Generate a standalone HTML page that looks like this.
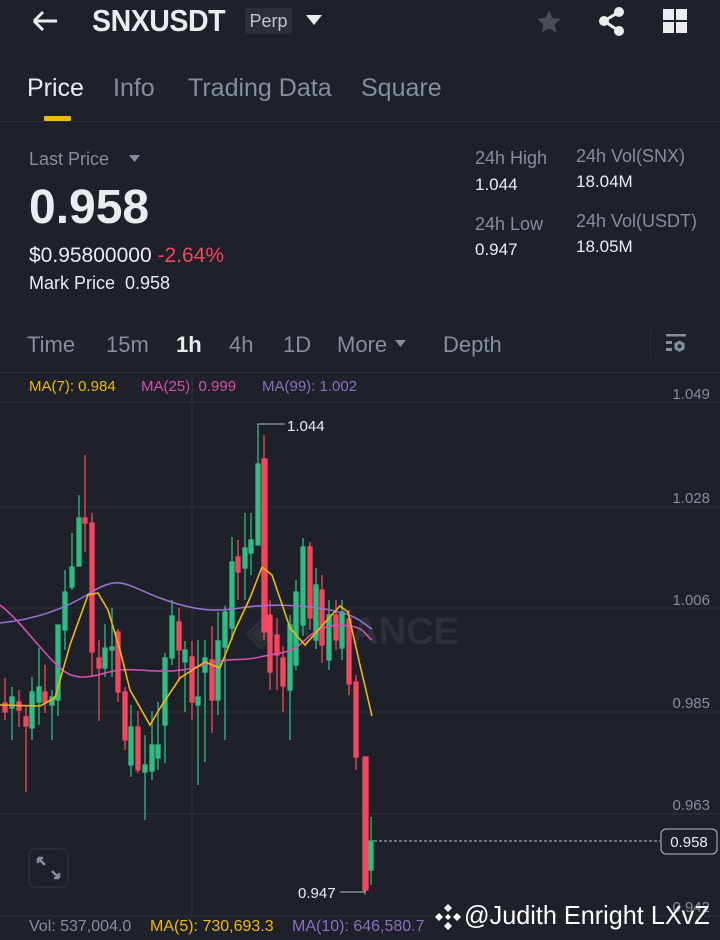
<!DOCTYPE html>
<html><head><meta charset="utf-8"><style>
*{margin:0;padding:0;box-sizing:border-box}
body{width:720px;height:940px;background:#1e2129;overflow:hidden;position:relative;font-family:"Liberation Sans Narrow","Liberation Sans",sans-serif;color:#eaecef}
.a{position:absolute;white-space:nowrap}
.g{color:#848e9c}
</style></head><body>
<svg class="a" style="left:30px;top:8px" width="30" height="26" viewBox="0 0 30 26"><path d="M4 13H27M4 13L13 4M4 13L13 22" stroke="#eaecef" stroke-width="3" fill="none"/></svg>
<div class="a" style="left:92px;top:3px;font-size:31px;font-weight:bold;font-family:'Liberation Sans',sans-serif;letter-spacing:-0.5px;transform:scaleX(.92);transform-origin:left">SNXUSDT</div>
<div class="a" style="left:245px;top:8px;width:47px;height:26px;background:#2b2f36;border-radius:3px;font-size:18px;color:#c0c4cc;text-align:center;line-height:26px">Perp</div>
<svg class="a" style="left:305px;top:14px" width="18" height="12"><path d="M1 1H17L9 11Z" fill="#eaecef"/></svg>
<svg class="a" style="left:535px;top:8px" width="28" height="28" viewBox="0 0 24 24"><path d="M12 2l3 6.5 7 .8-5.2 4.8 1.5 7L12 17.5 5.7 21l1.5-7L2 9.3l7-.8z" fill="#474d57"/></svg>
<svg class="a" style="left:596px;top:6px" width="32" height="30" viewBox="0 0 32 30"><circle cx="23" cy="6" r="5" fill="#eaecef"/><circle cx="8" cy="15" r="5" fill="#eaecef"/><circle cx="23" cy="25" r="5" fill="#eaecef"/><path d="M8 15L23 6M8 15L23 25" stroke="#eaecef" stroke-width="3"/></svg>
<svg class="a" style="left:663px;top:9px" width="25" height="25"><rect x="0" y="0" width="11" height="11" fill="#eaecef"/><rect x="13" y="0" width="11" height="11" fill="#eaecef"/><rect x="0" y="13" width="11" height="11" fill="#eaecef"/><rect x="13" y="13" width="11" height="11" fill="#eaecef"/></svg>
<div class="a" style="left:27px;top:74px;font-size:25px">Price</div>
<div class="a g" style="left:113px;top:74px;font-size:25px">Info</div>
<div class="a g" style="left:188px;top:74px;font-size:25px">Trading Data</div>
<div class="a g" style="left:361px;top:74px;font-size:25px">Square</div>
<div class="a" style="left:44px;top:116px;width:27px;height:5px;background:#f0b90b;border-radius:1px"></div>
<div class="a" style="left:0;top:121px;width:720px;height:1px;background:#2b2f36"></div>
<div class="a g" style="left:29px;top:149px;font-size:18px">Last Price</div>
<svg class="a" style="left:129px;top:155px" width="11" height="8"><path d="M0 0H11L5.5 7Z" fill="#848e9c"/></svg>
<div class="a" style="left:29px;top:180px;font-size:48px;font-weight:bold">0.958</div>
<div class="a" style="left:29px;top:244px;font-size:21px">$0.95800000 <span style="color:#f6465d">-2.64%</span></div>
<div class="a" style="left:29px;top:273px;font-size:18px">Mark Price&nbsp; 0.958</div>
<div class="a g" style="left:475px;top:148px;font-size:18px">24h High</div>
<div class="a" style="left:475px;top:175px;font-size:17px">1.044</div>
<div class="a g" style="left:475px;top:214px;font-size:18px">24h Low</div>
<div class="a" style="left:475px;top:240px;font-size:17px">0.947</div>
<div class="a g" style="left:576px;top:146px;font-size:18px">24h Vol(SNX)</div>
<div class="a" style="left:576px;top:172px;font-size:17px">18.04M</div>
<div class="a g" style="left:576px;top:211px;font-size:18px">24h Vol(USDT)</div>
<div class="a" style="left:576px;top:237px;font-size:17px">18.05M</div>
<div class="a g" style="left:27px;top:332px;font-size:22px">Time</div>
<div class="a g" style="left:106px;top:332px;font-size:22px">15m</div>
<div class="a" style="left:176px;top:332px;font-size:22px;font-weight:bold">1h</div>
<div class="a g" style="left:229px;top:332px;font-size:22px">4h</div>
<div class="a g" style="left:283px;top:332px;font-size:22px">1D</div>
<div class="a g" style="left:337px;top:332px;font-size:22px">More</div>
<svg class="a" style="left:395px;top:340px" width="11" height="8"><path d="M0 0H11L5.5 7Z" fill="#848e9c"/></svg>
<div class="a g" style="left:443px;top:332px;font-size:22px">Depth</div>
<div class="a" style="left:650px;top:330px;width:1px;height:26px;background:#2b2f36"></div>
<svg class="a" style="left:664px;top:333px" width="24" height="24"><rect x="2" y="1" width="20" height="2.5" fill="#848e9c"/><rect x="2" y="8" width="6" height="3" fill="#848e9c"/><rect x="2" y="15" width="6" height="3" fill="#848e9c"/><path d="M15.5 7.5l5 2.8v5.8l-5 2.8-5-2.8v-5.8z" fill="#848e9c"/><circle cx="15.5" cy="13.2" r="2" fill="#1e2129"/></svg>
<div class="a" style="left:0;top:372px;width:720px;height:1px;background:#2b2f36"></div>
<div class="a" style="left:29px;top:378px;font-size:15px;color:#f0b90b">MA(7): 0.984</div>
<div class="a" style="left:141px;top:378px;font-size:15px;color:#d54fb0">MA(25): 0.999</div>
<div class="a" style="left:262px;top:378px;font-size:15px;color:#8a6fc0">MA(99): 1.002</div>
<svg class="a" style="left:0;top:0" width="720" height="940">
<g stroke="#2b2f36" stroke-width="1.3">
<line x1="0" y1="402" x2="720" y2="402"/><line x1="0" y1="507" x2="720" y2="507"/><line x1="0" y1="608" x2="720" y2="608"/><line x1="0" y1="712" x2="720" y2="712"/><line x1="0" y1="814" x2="720" y2="814"/><line x1="0" y1="916" x2="720" y2="916"/><line x1="192" y1="372" x2="192" y2="916"/>
</g>
<text x="246" y="644" font-family="Liberation Sans" font-weight="bold" font-size="38" fill="#2c3039">◈ BINANCE</text>
<g font-family="Liberation Sans Narrow,Liberation Sans" font-size="15" fill="#848e9c" text-anchor="end">
<text x="710" y="399">1.049</text><text x="710" y="503">1.028</text><text x="710" y="605">1.006</text><text x="710" y="708">0.985</text><text x="710" y="810">0.963</text><text x="710" y="912">0.942</text>
</g>
<g stroke-width="1.3">
<g fill="#f6465d" stroke="#f6465d">
<line x1="5" y1="678" x2="5" y2="720"/><rect x="3" y="703" width="4" height="9"/>
<line x1="19" y1="690" x2="19" y2="727"/><rect x="17" y="702" width="4" height="8"/>
<line x1="26" y1="705" x2="26" y2="792"/><rect x="24" y="717" width="4" height="9"/>
<line x1="45" y1="665" x2="45" y2="713"/><rect x="43" y="692" width="4" height="10"/>
<line x1="85" y1="455" x2="85" y2="552"/><rect x="83" y="518" width="4" height="5"/>
<line x1="92" y1="513" x2="92" y2="676"/><rect x="90" y="523" width="4" height="129"/>
<line x1="99" y1="640" x2="99" y2="721"/><rect x="97" y="658" width="4" height="10"/>
<line x1="118" y1="629" x2="118" y2="702"/><rect x="116" y="632" width="4" height="60"/>
<line x1="125" y1="687" x2="125" y2="750"/><rect x="123" y="692" width="4" height="48"/>
<line x1="138" y1="711" x2="138" y2="773"/><rect x="136" y="727" width="4" height="43"/>
<line x1="179" y1="608" x2="179" y2="681"/><rect x="177" y="622" width="4" height="28"/>
<line x1="192" y1="641" x2="192" y2="720"/><rect x="190" y="657" width="4" height="45"/>
<line x1="212" y1="626" x2="212" y2="733"/><rect x="210" y="660" width="4" height="40"/>
<line x1="238" y1="540" x2="238" y2="600"/><rect x="236" y="557" width="4" height="15"/>
<line x1="264" y1="435" x2="264" y2="640"/><rect x="262" y="459" width="5" height="173"/>
<line x1="270" y1="600" x2="270" y2="690"/><rect x="268" y="615" width="4" height="57"/>
<line x1="277" y1="618" x2="277" y2="690"/><rect x="275" y="635" width="4" height="20"/>
<line x1="283" y1="646" x2="283" y2="712"/><rect x="281" y="658" width="4" height="28"/>
<line x1="310" y1="542" x2="310" y2="630"/><rect x="308" y="547" width="4" height="71"/>
<line x1="322" y1="575" x2="322" y2="663"/><rect x="320" y="590" width="4" height="55"/>
<line x1="336" y1="600" x2="336" y2="650"/><rect x="334" y="615" width="4" height="25"/>
<line x1="349" y1="610" x2="349" y2="695"/><rect x="347" y="619" width="4" height="65"/>
<line x1="356" y1="675" x2="356" y2="770"/><rect x="354" y="682" width="4" height="75"/>
<line x1="365" y1="757" x2="365" y2="895"/><rect x="363" y="757" width="5" height="133"/>
</g>
<g fill="#2ebd85" stroke="#2ebd85">
<line x1="12" y1="687" x2="12" y2="740"/><rect x="10" y="697" width="4" height="11"/>
<line x1="32" y1="677" x2="32" y2="740"/><rect x="30" y="692" width="4" height="36"/>
<line x1="39" y1="648" x2="39" y2="725"/><rect x="37" y="687" width="4" height="15"/>
<line x1="52" y1="690" x2="52" y2="740"/><rect x="50" y="697" width="4" height="8"/>
<line x1="58" y1="625" x2="58" y2="716"/><rect x="56" y="625" width="4" height="75"/>
<line x1="65" y1="570" x2="65" y2="650"/><rect x="63" y="592" width="4" height="38"/>
<line x1="72" y1="533" x2="72" y2="590"/><rect x="70" y="567" width="4" height="20"/>
<line x1="79" y1="495" x2="79" y2="566"/><rect x="77" y="518" width="4" height="48"/>
<line x1="105" y1="624" x2="105" y2="677"/><rect x="103" y="648" width="4" height="20"/>
<line x1="112" y1="608" x2="112" y2="677"/><rect x="110" y="647" width="4" height="3"/>
<line x1="131" y1="705" x2="131" y2="777"/><rect x="129" y="727" width="4" height="38"/>
<line x1="145" y1="735" x2="145" y2="820"/><rect x="143" y="765" width="4" height="7"/>
<line x1="152" y1="711" x2="152" y2="780"/><rect x="150" y="745" width="4" height="26"/>
<line x1="158" y1="702" x2="158" y2="770"/><rect x="156" y="745" width="4" height="13"/>
<line x1="165" y1="653" x2="165" y2="763"/><rect x="163" y="658" width="4" height="67"/>
<line x1="172" y1="600" x2="172" y2="665"/><rect x="170" y="616" width="4" height="42"/>
<line x1="185" y1="641" x2="185" y2="712"/><rect x="183" y="650" width="4" height="12"/>
<line x1="198" y1="640" x2="198" y2="785"/><rect x="196" y="697" width="4" height="8"/>
<line x1="205" y1="640" x2="205" y2="762"/><rect x="203" y="658" width="4" height="14"/>
<line x1="218" y1="612" x2="218" y2="715"/><rect x="216" y="641" width="4" height="59"/>
<line x1="225" y1="606" x2="225" y2="740"/><rect x="223" y="612" width="4" height="35"/>
<line x1="232" y1="537" x2="232" y2="640"/><rect x="230" y="562" width="4" height="66"/>
<line x1="245" y1="513" x2="245" y2="600"/><rect x="243" y="548" width="4" height="20"/>
<line x1="251" y1="513" x2="251" y2="575"/><rect x="249" y="540" width="4" height="13"/>
<line x1="258" y1="425" x2="258" y2="545"/><rect x="256" y="464" width="4" height="81"/>
<line x1="290" y1="615" x2="290" y2="740"/><rect x="288" y="625" width="4" height="65"/>
<line x1="296" y1="580" x2="296" y2="670"/><rect x="294" y="592" width="4" height="73"/>
<line x1="303" y1="538" x2="303" y2="636"/><rect x="301" y="547" width="4" height="78"/>
<line x1="316" y1="568" x2="316" y2="649"/><rect x="314" y="585" width="4" height="55"/>
<line x1="329" y1="600" x2="329" y2="670"/><rect x="327" y="615" width="4" height="45"/>
<line x1="342" y1="600" x2="342" y2="660"/><rect x="340" y="612" width="4" height="36"/>
<line x1="371" y1="817" x2="371" y2="885"/><rect x="369" y="841" width="4" height="29"/>
</g>
</g>
<g fill="none" stroke-width="1.6">
<path d="M0 623 C30 620,60 612,90 593 S125 585,160 598 S215 612,240 608 S300 604,330 610 S360 622,372 629" stroke="#9b6fd6"/>
<path d="M0 605 C20 620,40 650,60 668 S100 672,120 670 S170 676,200 666 S240 662,260 657 S290 655,305 640 S335 624,350 626 S365 635,372 640" stroke="#d54fb0"/>
<path d="M0 705 L40 706 L55 698 L70 645 L88 595 L98 593 L108 610 L120 650 L130 690 L150 725 L162 705 L180 678 L205 662 L220 668 L235 630 L250 598 L262 567 L272 575 L290 628 L305 645 L320 628 L340 606 L348 612 L360 665 L372 716" stroke="#f0b90b"/>
</g>
<path d="M258 425V424H285" stroke="#b7bdc6" fill="none"/>
<text x="287" y="431" font-family="Liberation Sans Narrow,Liberation Sans" font-size="15" fill="#eaecef">1.044</text>
<path d="M365 890V892H340" stroke="#b7bdc6" fill="none"/>
<text x="298" y="898" font-family="Liberation Sans Narrow,Liberation Sans" font-size="15" fill="#eaecef">0.947</text>
<line x1="374" y1="841" x2="660" y2="841" stroke="#b7bdc6" stroke-dasharray="3 2"/>
<rect x="661" y="829" width="56" height="25" rx="5" fill="#1e2129" stroke="#b7bdc6"/>
<text x="689" y="847" text-anchor="middle" font-family="Liberation Sans Narrow,Liberation Sans" font-size="15" fill="#eaecef">0.958</text>
<rect x="29" y="849" width="39" height="38" rx="6" fill="none" stroke="#2f333b" stroke-width="1.5"/>
<path d="M38 858L45 865M38 858h5M38 858v5M59 878L52 871M59 878h-5M59 878v-5" stroke="#848e9c" stroke-width="2.5" fill="none"/>
</svg>
<div class="a g" style="left:29px;top:918px;font-size:16px">Vol: 537,004.0</div>
<div class="a" style="left:150px;top:918px;font-size:16px;color:#f0b90b">MA(5): 730,693.3</div>
<div class="a" style="left:292px;top:918px;font-size:16px;color:#8a6fc0">MA(10): 646,580.7</div>
<svg class="a" style="left:434px;top:903px" width="28" height="28" viewBox="0 0 28 28"><g fill="#fff"><path d="M14 1l4 4-4 4-4-4z"/><path d="M5 10l4 4-4 4-4-4z"/><path d="M23 10l4 4-4 4-4-4z"/><path d="M14 19l4 4-4 4-4-4z"/><path d="M14 11l3 3-3 3-3-3z"/></g></svg>
<div class="a" style="left:464px;top:900px;font-size:26px;color:#fff;font-family:'Liberation Sans',sans-serif;transform:scaleX(.97);transform-origin:left">@Judith Enright LXvZ</div>
</body></html>
